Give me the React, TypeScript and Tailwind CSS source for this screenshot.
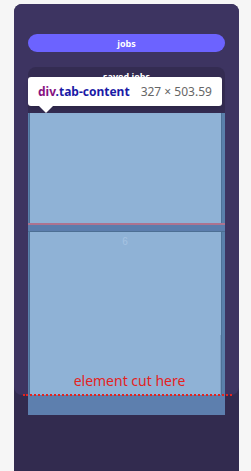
import React from "react";

export default function App() {
  return (
    <div className="min-h-screen bg-[#f6f6f6] flex pt-1 pl-[14px] font-['Open_Sans',sans-serif]">
      <div className="relative w-[225px] h-[467px] bg-[#322b4f] rounded-t-lg">
        {/* card */}
        <div className="h-[391px] rounded-lg bg-[#3d3461] px-[14px] pt-[30px] flex flex-col">
          <button className="h-[18px] shrink-0 w-full rounded-full bg-[#6c63ff] text-white text-[9px] font-bold leading-none">
            jobs
          </button>
          <div className="mt-[15px] h-[46px] shrink-0 rounded-t-lg bg-[#342c52] text-white text-[9px] font-bold text-center pt-[3px]">
            saved jobs
          </div>

          {/* highlighted element */}
          <div className="flex flex-col h-[302px] shrink-0 bg-[#5a80ab]">
            <div className="h-[110px] shrink-0 ml-px mr-[3px] border-x border-[#4d7197] bg-[#8fb2d6]" />
            <div className="h-[2px] shrink-0 bg-[#ad7390]" />
            <div className="h-[6px] shrink-0 bg-[#5b7dad]" />
            <div className="h-px shrink-0 bg-[#4d6f94]" />
            <div className="h-[163px] shrink-0 ml-px mr-[3px] border-x border-[#4d7197] bg-[#8fb2d6] flex">
              <div className="flex-1 text-center text-[10px] text-[#a6c3e2] pt-[2px] font-['Liberation_Sans',sans-serif]">
                6
              </div>
              <div className="w-px flex flex-col justify-end">
                <div className="h-[60px] bg-[#7a9cc2]" />
              </div>
            </div>
            <div className="h-[20px] shrink-0 bg-[#5d7fae]" />
          </div>
        </div>

        {/* devtools tooltip */}
        <div className="absolute left-[14px] top-[73px] w-[194px] h-[29px] bg-white rounded-[3px] shadow-md flex items-center px-[10px] gap-[11px] text-[12px] font-['Noto_Sans',sans-serif]">
          <span className="font-bold">
            <span className="text-[#881280]">div</span>
            <span className="text-[#1a1aa6]">.tab-content</span>
          </span>
          <span className="text-[#666666]">327 × 503.59</span>
        </div>
        <div className="absolute left-[25px] top-[102px] w-0 h-0 border-l-[7px] border-r-[7px] border-t-[7px] border-l-transparent border-r-transparent border-t-white" />

        {/* cut marker */}
        <div className="absolute left-0 top-[366px] w-[225px] text-center pl-[6px] text-[14px] text-[#e3231f] font-['Noto_Sans',sans-serif]">
          element cut here
        </div>
        <div className="absolute left-[9px] top-[390px] w-[209px] border-t-2 border-dotted border-[#e3231f]" />
      </div>
    </div>
  );
}
